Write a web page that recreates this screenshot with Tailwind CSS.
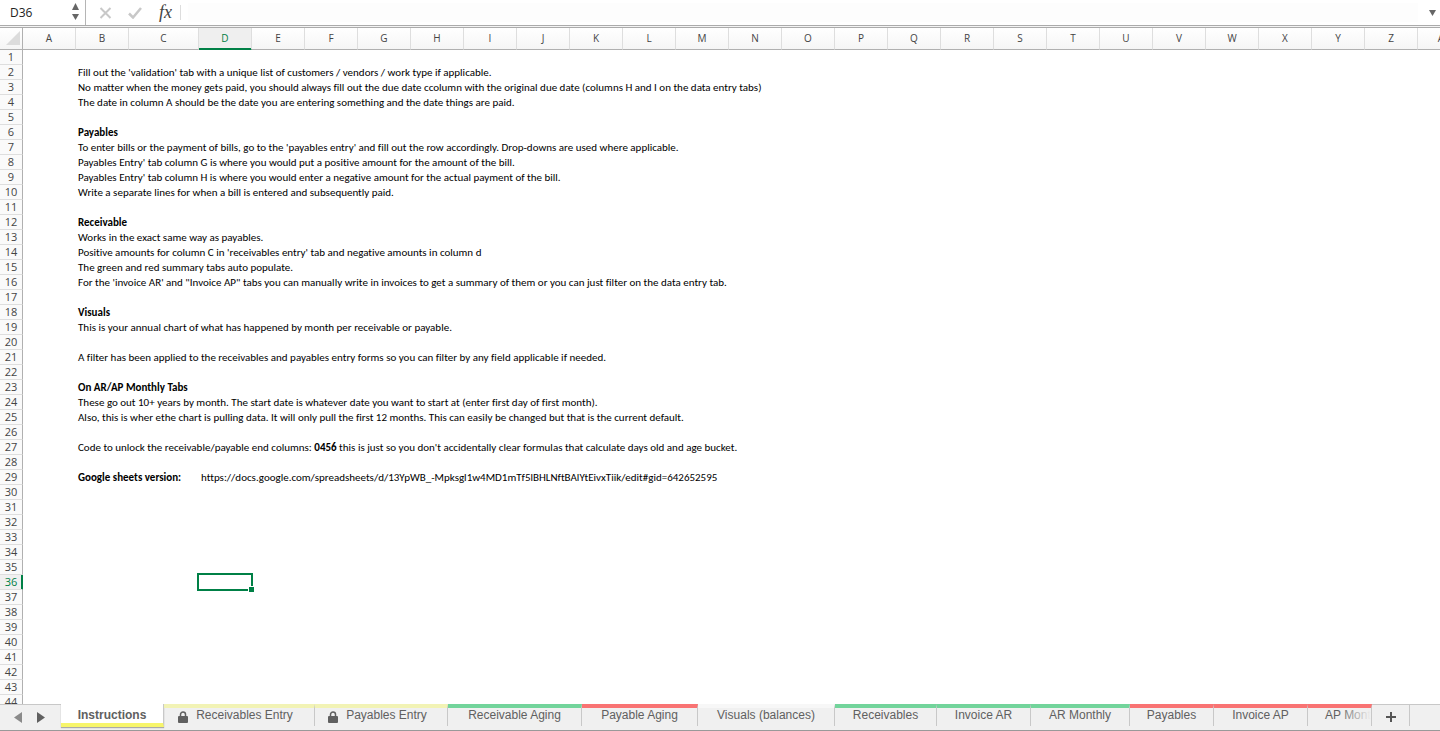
<!DOCTYPE html>
<html lang="en">
<head>
<meta charset="utf-8">
<title>Instructions</title>
<script src="https://cdn.jsdelivr.net/npm/@tailwindcss/browser@4"></script>
</head>
<body class="flex h-screen flex-col overflow-hidden bg-white font-['Carlito','Calibri','Lato','Liberation_Sans',sans-serif] text-black">
<header class="flex h-[28px] shrink-0 flex-col border-b border-[#ababab] bg-[#f4f4f4]">
  <div class="flex h-[26px] items-center border-b border-[#ababab] bg-white">
    <input aria-label="Name box" value="D36" class="w-[66px] pt-px pl-[10px] font-['Open_Sans',sans-serif] text-xs text-[#222] outline-none">
    <div class="flex w-[20px] flex-col items-center gap-[4px] self-stretch border-r border-[#b5b5b5] pt-[3px]">
      <button aria-label="Previous name"><svg class="block" width="7" height="7"><path d="M3.500 0L7 7H0z" fill="#666"/></svg></button>
      <button aria-label="Next name"><svg class="block" width="7" height="6"><path d="M0 0H7L3.500 6z" fill="#666"/></svg></button>
    </div>
    <button aria-label="Cancel" class="ml-[13px]"><svg class="block" width="13" height="12" fill="none" stroke="#c8c8c8" stroke-width="2"><path d="M1.500 1l10 10M11.500 1l-10 10"/></svg></button>
    <button aria-label="Enter" class="ml-[16px]"><svg class="block" width="14" height="12" fill="none" stroke="#c8c8c8" stroke-width="2.500"><path d="M1 6.500l4 4L13 1"/></svg></button>
    <button aria-label="Insert function" class="ml-[16px] w-[15px] pb-[2px] font-['Liberation_Serif',serif] text-lg leading-6 text-[#444] italic">fx</button>
    <span class="ml-[7px] h-[15px] border-l border-[#ddd]"></span>
    <input aria-label="Formula bar" class="ml-[7px] h-[19px] min-w-0 flex-1 bg-[#fdfdfd] outline-none">
    <button aria-label="Expand formula bar" class="ml-[11px] mr-[4px]"><svg class="block" width="7" height="6"><path d="M0 0H7L3.500 6z" fill="#666"/></svg></button>
  </div>
</header>
<main class="min-h-0 flex-1 overflow-hidden">
<table class="w-px table-fixed border-separate border-spacing-0 text-[11px] leading-[14px] whitespace-nowrap [font-variant-ligatures:none] [&_td]:p-0 [&_td]:px-[2px] [&_th]:p-0 [&_th]:font-['Open_Sans',sans-serif] [&_th]:font-medium [&_thead_th]:border-b [&_thead_th]:border-[#b0b0b0] [&_thead_th]:pb-px [&_thead_th+th]:border-r [&_thead_th+th]:border-r-[#dedede] [&_tbody_th]:h-[15px] [&_tbody_th]:border-r [&_tbody_th]:border-b [&_tbody_th]:border-r-[#b0b0b0] [&_tbody_th]:border-b-[#dedede] [&_tbody_th]:bg-[#fafafa]">
<colgroup><col class="w-[23px]"><col class="w-[53px]"><col class="w-[53px]"><col class="w-[70px]"><col span="24" class="w-[53px]"></colgroup>
<thead class="text-[10px] text-[#444]">
<tr class="h-[22px] bg-linear-to-b from-white to-[#f5f5f5]"><th aria-label="Select all" class="border-r border-r-[#b0b0b0]"><svg class="ml-[5px] block" width="16" height="16"><path d="M15 1V15H1z" fill="#dcdcdc"/></svg></th><th>A</th><th>B</th><th>C</th><th class="bg-[#efefef] text-[#008046] shadow-[inset_0_-1px_0_#008046] !border-b-[#008046]">D</th><th>E</th><th>F</th><th>G</th><th>H</th><th>I</th><th>J</th><th>K</th><th>L</th><th>M</th><th>N</th><th>O</th><th>P</th><th>Q</th><th>R</th><th>S</th><th>T</th><th>U</th><th>V</th><th>W</th><th>X</th><th>Y</th><th>Z</th><th>AA</th></tr>
</thead>
<tbody class="[&_th]:text-[#444]">
<tr><th>1</th></tr>
<tr><th>2</th><td></td><td colspan="25">Fill out the 'validation' tab with a unique list of customers / vendors / work type if applicable.</td></tr>
<tr><th>3</th><td></td><td colspan="25">No matter when the money gets paid, you should always fill out the due date ccolumn with the original due date (columns H and I on the data entry tabs)</td></tr>
<tr><th>4</th><td></td><td colspan="25">The date in column A should be the date you are entering something and the date things are paid.</td></tr>
<tr><th>5</th></tr>
<tr><th>6</th><td></td><td colspan="25" class="font-bold">Payables</td></tr>
<tr><th>7</th><td></td><td colspan="25">To enter bills or the payment of bills, go to the 'payables entry' and fill out the row accordingly. Drop-downs are used where applicable.</td></tr>
<tr><th>8</th><td></td><td colspan="25">Payables Entry' tab column G is where you would put a positive amount for the amount of the bill.</td></tr>
<tr><th>9</th><td></td><td colspan="25">Payables Entry' tab column H is where you would enter a negative amount for the actual payment of the bill.</td></tr>
<tr><th>10</th><td></td><td colspan="25">Write a separate lines for when a bill is entered and subsequently paid.</td></tr>
<tr><th>11</th></tr>
<tr><th>12</th><td></td><td colspan="25" class="font-bold">Receivable</td></tr>
<tr><th>13</th><td></td><td colspan="25">Works in the exact same way as payables.</td></tr>
<tr><th>14</th><td></td><td colspan="25">Positive amounts for column C in 'receivables entry' tab and negative amounts in column d</td></tr>
<tr><th>15</th><td></td><td colspan="25">The green and red summary tabs auto populate.</td></tr>
<tr><th>16</th><td></td><td colspan="25">For the 'invoice AR' and "Invoice AP" tabs you can manually write in invoices to get a summary of them or you can just filter on the data entry tab.</td></tr>
<tr><th>17</th></tr>
<tr><th>18</th><td></td><td colspan="25" class="font-bold">Visuals</td></tr>
<tr><th>19</th><td></td><td colspan="25">This is your annual chart of what has happened by month per receivable or payable.</td></tr>
<tr><th>20</th></tr>
<tr><th>21</th><td></td><td colspan="25">A filter has been applied to the receivables and payables entry forms so you can filter by any field applicable if needed.</td></tr>
<tr><th>22</th></tr>
<tr><th>23</th><td></td><td colspan="25" class="font-bold">On AR/AP Monthly Tabs</td></tr>
<tr><th>24</th><td></td><td colspan="25">These go out 10+ years by month. The start date is whatever date you want to start at (enter first day of first month).</td></tr>
<tr><th>25</th><td></td><td colspan="25">Also, this is wher ethe chart is pulling data. It will only pull the first 12 months. This can easily be changed but that is the current default.</td></tr>
<tr><th>26</th></tr>
<tr><th>27</th><td></td><td colspan="25">Code to unlock the receivable/payable end columns: <b>0456</b> this is just so you don't accidentally clear formulas that calculate days old and age bucket.</td></tr>
<tr><th>28</th></tr>
<tr><th>29</th><td></td><td colspan="2" class="font-bold">Google sheets version:</td><td colspan="23">https://docs.google.com/spreadsheets/d/13YpWB_-Mpksgl1w4MD1mTf5lBHLNftBAlYtEivxTiik/edit#gid=642652595</td></tr>
<tr><th>30</th></tr>
<tr><th>31</th></tr>
<tr><th>32</th></tr>
<tr><th>33</th></tr>
<tr><th>34</th></tr>
<tr><th>35</th></tr>
<tr><th class="!bg-[#f0f0f0] !text-[#008046] shadow-[inset_-1px_0_0_#008046] !border-r-[#008046]">36</th><td></td><td></td><td></td><td class="relative"><div class="absolute -top-[2px] -right-px -bottom-px -left-[2px] border-2 border-[#008046]"><i class="absolute -right-[3px] -bottom-[3px] size-[6px] border-t border-l border-white bg-[#008046]"></i></div></td></tr>
<tr><th>37</th></tr>
<tr><th>38</th></tr>
<tr><th>39</th></tr>
<tr><th>40</th></tr>
<tr><th>41</th></tr>
<tr><th>42</th></tr>
<tr><th>43</th></tr>
<tr><th>44</th></tr>
</tbody>
</table>
</main>
<footer class="flex h-[27px] shrink-0 border-b border-[#999] bg-[#f0f0f0] font-['Liberation_Sans',sans-serif] text-xs text-[#606060]">
  <div class="flex w-[61px] shrink-0 items-center gap-[15px] border-t border-[#c8c8c8] pl-[14px]">
    <button aria-label="Previous sheet"><svg class="block" width="8" height="11"><path d="M8 0V11L0 5.500z" fill="#8a8a8a"/></svg></button>
    <button aria-label="Next sheet"><svg class="block" width="8" height="11"><path d="M0 0V11L8 5.500z" fill="#606060"/></svg></button>
  </div>
  <nav aria-label="Sheets" class="flex h-[22px] shrink-0 [&>button]:shrink-0 [&>button]:border-r [&>button]:border-r-[#c8c8c8] [&>button]:leading-[14px]">
    <button class="flex h-[23px] w-[103px] items-start justify-center border-b-4 border-b-[#f7f56b] bg-white pt-[4px] font-bold shadow-[0_1px_1px_#aaa]">Instructions</button>
    <button class="flex w-[151px] items-start justify-center gap-[8px] border-t-4 border-t-[#f2f3b5] pr-[7px]"><svg class="mt-[3px] block" width="10" height="12"><path d="M2.500 6V3.500a2.500 2.500 0 0 1 5 0V6" fill="none" stroke="#606060" stroke-width="1.500"/><rect y="5" width="10" height="7" rx="1" fill="#606060"/></svg>Receivables Entry</button>
    <button class="flex w-[133px] items-start justify-center gap-[8px] border-t-4 border-t-[#f2f3b5] pr-[7px]"><svg class="mt-[3px] block" width="10" height="12"><path d="M2.500 6V3.500a2.500 2.500 0 0 1 5 0V6" fill="none" stroke="#606060" stroke-width="1.500"/><rect y="5" width="10" height="7" rx="1" fill="#606060"/></svg>Payables Entry</button>
    <button class="flex w-[134px] items-start justify-center border-t-4 border-t-[#72d49b]">Receivable Aging</button>
    <button class="flex w-[116px] items-start justify-center border-t-4 border-t-[#f97373]">Payable Aging</button>
    <button class="flex w-[137px] items-start justify-center border-t-4 border-t-[#f7f7f7]">Visuals (balances)</button>
    <button class="flex w-[102px] items-start justify-center border-t-4 border-t-[#72d49b]">Receivables</button>
    <button class="flex w-[94px] items-start justify-center border-t-4 border-t-[#72d49b]">Invoice AR</button>
    <button class="flex w-[99px] items-start justify-center border-t-4 border-t-[#72d49b]">AR Monthly</button>
    <button class="flex w-[84px] items-start justify-center border-t-4 border-t-[#f97373]">Payables</button>
    <button class="flex w-[94px] items-start justify-center border-t-4 border-t-[#f97373]">Invoice AP</button>
    <button class="relative flex w-[64px] items-start overflow-hidden border-t-4 border-t-[#f97373] pl-[17px] whitespace-nowrap">AP Monthly<i class="absolute -top-[4px] right-0 h-[22px] w-[32px] bg-linear-to-r from-transparent to-[#f0f0f0]"></i></button>
    <button aria-label="Add sheet" class="flex w-[38px] items-center justify-center border-t border-t-[#c8c8c8] pt-[2px]"><svg class="block" width="10" height="10"><path d="M5 0V10M0 5H10" stroke="#555" stroke-width="2"/></svg></button>
  </nav>
  <div class="flex-1 border-t border-[#c8c8c8]"></div>
</footer>
</body>
</html>
